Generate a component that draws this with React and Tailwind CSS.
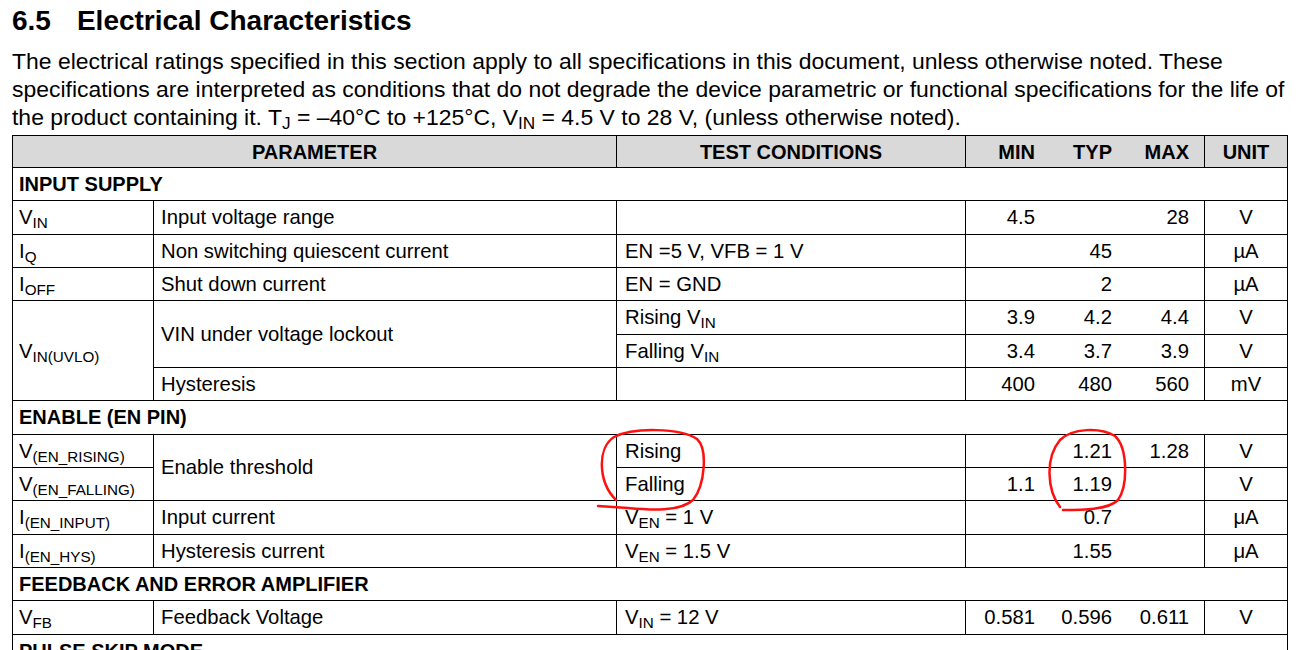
import React from "react";

// one table cell; the table draws its own left and top edge
function Cell({ className = "", noRight = false, children }) {
  return (
    <div
      className={
        "flex items-center border-b border-black whitespace-nowrap " +
        (noRight ? "" : "border-r ") +
        className
      }
    >
      <span>{children}</span>
    </div>
  );
}

const Sym = ({ children, className = "" }) => <Cell className={"pl-[6px] " + className}>{children}</Cell>;
const Param = ({ children, className = "" }) => <Cell className={"pl-[7px] " + className}>{children}</Cell>;
const Cond = ({ children }) => <Cell className="pl-[8px]">{children}</Cell>;
const Min = ({ children }) => <Cell noRight className="justify-end pr-[11px]">{children}</Cell>;
const Typ = ({ children }) => <Cell noRight className="justify-end pr-[12px]">{children}</Cell>;
const Max = ({ children }) => <Cell className="justify-end pr-[15px]">{children}</Cell>;
const Unit = ({ children }) => <Cell className="justify-center">{children}</Cell>;
const Section = ({ children }) => <Cell className="col-span-7 pl-[6px] text-[20px] font-bold">{children}</Cell>;

export default function App() {
  return (
    <div className="relative h-[650px] w-[1299px] overflow-hidden bg-white text-black font-['Liberation_Sans',Arial,sans-serif]">
      <h1 className="pl-[12px] pt-[1px] text-[28px] leading-[40px] font-bold whitespace-nowrap">
        <span>6.5</span>
        <span className="ml-[26px]">Electrical Characteristics</span>
      </h1>

      <p className="mt-[6px] pl-[12px] text-[22.95px] leading-[28px] whitespace-nowrap">
        The electrical ratings specified in this section apply to all specifications in this document, unless otherwise noted. These
        <br />
        specifications are interpreted as conditions that do not degrade the device parametric or functional specifications for the life of
        <br />
        the product containing it. T<sub>J</sub> = –40°C to +125°C, V<sub>IN</sub> = 4.5 V to 28 V, (unless otherwise noted).
      </p>

      <div className="mt-[4px] ml-[12px] grid w-[1276px] grid-cols-[141px_463px_349px_80px_78px_81px_83px] grid-rows-[32px_repeat(15,33.33px)] border-l border-t border-black text-[20.3px] leading-[24px]">
        {/* header */}
        <Cell className="col-span-2 justify-center bg-[#d9d9d9] text-[20px] font-bold">PARAMETER</Cell>
        <Cell className="justify-center bg-[#d9d9d9] text-[20px] font-bold">TEST CONDITIONS</Cell>
        <Cell noRight className="justify-end pr-[11px] bg-[#d9d9d9] text-[20px] font-bold">MIN</Cell>
        <Cell noRight className="justify-end pr-[12px] bg-[#d9d9d9] text-[20px] font-bold">TYP</Cell>
        <Cell className="justify-end pr-[15px] bg-[#d9d9d9] text-[20px] font-bold">MAX</Cell>
        <Cell className="justify-center bg-[#d9d9d9] text-[20px] font-bold">UNIT</Cell>

        <Section>INPUT SUPPLY</Section>

        <Sym>V<sub>IN</sub></Sym>
        <Param>Input voltage range</Param>
        <Cond></Cond>
        <Min>4.5</Min>
        <Typ></Typ>
        <Max>28</Max>
        <Unit>V</Unit>

        <Sym>I<sub>Q</sub></Sym>
        <Param>Non switching quiescent current</Param>
        <Cond>EN =5 V, VFB = 1 V</Cond>
        <Min></Min>
        <Typ>45</Typ>
        <Max></Max>
        <Unit>µA</Unit>

        <Sym>I<sub>OFF</sub></Sym>
        <Param>Shut down current</Param>
        <Cond>EN = GND</Cond>
        <Min></Min>
        <Typ>2</Typ>
        <Max></Max>
        <Unit>µA</Unit>

        <Sym className="row-span-3">V<sub>IN(UVLO)</sub></Sym>
        <Param className="row-span-2">VIN under voltage lockout</Param>
        <Cond>Rising V<sub>IN</sub></Cond>
        <Min>3.9</Min>
        <Typ>4.2</Typ>
        <Max>4.4</Max>
        <Unit>V</Unit>

        <Cond>Falling V<sub>IN</sub></Cond>
        <Min>3.4</Min>
        <Typ>3.7</Typ>
        <Max>3.9</Max>
        <Unit>V</Unit>

        <Param>Hysteresis</Param>
        <Cond></Cond>
        <Min>400</Min>
        <Typ>480</Typ>
        <Max>560</Max>
        <Unit>mV</Unit>

        <Section>ENABLE (EN PIN)</Section>

        <Sym>V<sub>(EN_RISING)</sub></Sym>
        <Param className="row-span-2">Enable threshold</Param>
        <Cond>Rising</Cond>
        <Min></Min>
        <Typ>1.21</Typ>
        <Max>1.28</Max>
        <Unit>V</Unit>

        <Sym>V<sub>(EN_FALLING)</sub></Sym>
        <Cond>Falling</Cond>
        <Min>1.1</Min>
        <Typ>1.19</Typ>
        <Max></Max>
        <Unit>V</Unit>

        <Sym>I<sub>(EN_INPUT)</sub></Sym>
        <Param>Input current</Param>
        <Cond>V<sub>EN</sub> = 1 V</Cond>
        <Min></Min>
        <Typ>0.7</Typ>
        <Max></Max>
        <Unit>μA</Unit>

        <Sym>I<sub>(EN_HYS)</sub></Sym>
        <Param>Hysteresis current</Param>
        <Cond>V<sub>EN</sub> = 1.5 V</Cond>
        <Min></Min>
        <Typ>1.55</Typ>
        <Max></Max>
        <Unit>μA</Unit>

        <Section>FEEDBACK AND ERROR AMPLIFIER</Section>

        <Sym>V<sub>FB</sub></Sym>
        <Param>Feedback Voltage</Param>
        <Cond>V<sub>IN</sub> = 12 V</Cond>
        <Min>0.581</Min>
        <Typ>0.596</Typ>
        <Max>0.611</Max>
        <Unit>V</Unit>

        <Section>PULSE SKIP MODE</Section>
      </div>

      {/* hand-drawn red marks over the table */}
      <svg className="pointer-events-none absolute left-0 top-0" width="1299" height="650" viewBox="0 0 1299 650" fill="none">
        <path
          d="M616 500 C598 482, 597 448, 614 437 C634 427, 680 428, 697 439 C708 449, 705 485, 693 500 C680 512, 650 510, 628 508 L598 506"
          stroke="#ff1010"
          strokeWidth="2.5"
          strokeLinecap="round"
          strokeLinejoin="round"
        />
        <path
          d="M1060 507 C1047 490, 1045 458, 1060 440 C1072 428, 1100 427, 1115 436 C1128 448, 1128 486, 1118 500 C1108 510, 1082 510, 1063 510"
          stroke="#ff1010"
          strokeWidth="2.5"
          strokeLinecap="round"
          strokeLinejoin="round"
        />
      </svg>
    </div>
  );
}
